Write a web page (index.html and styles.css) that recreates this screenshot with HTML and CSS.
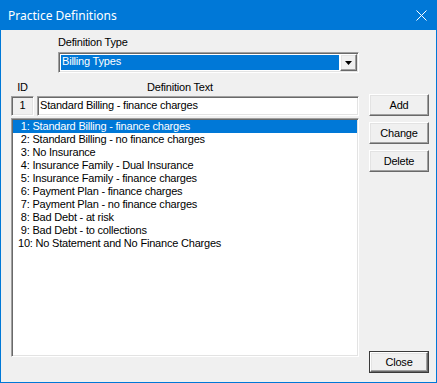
FILE: index.html
```html
<!DOCTYPE html>
<html>
<head>
<meta charset="utf-8">
<link rel="stylesheet" href="styles.css">
</head>
<body>
<div class="window">
  <div class="titlebar">
    <span class="title">Practice Definitions</span>
    <svg class="close-x" width="11" height="11" viewBox="0 0 11 11"><path d="M0.5 0.5 L10.5 10.5 M10.5 0.5 L0.5 10.5" stroke="#fff" stroke-width="1" fill="none"/></svg>
  </div>
  <div class="client">
    <div class="left">
      <div class="type-lbl">Definition Type</div>
      <div class="combo sunken">
        <div class="combo-value">Billing Types</div>
        <div class="combo-btn raised"><svg width="7" height="4" viewBox="0 0 7 4"><polygon points="0,0 7,0 3.5,4" fill="#000"/></svg></div>
      </div>
      <div class="lbl-row"><span class="id-lbl">ID</span><span class="text-lbl">Definition Text</span></div>
      <div class="field-row">
        <div class="id-box sunken">1</div>
        <div class="text-box sunken">Standard Billing - finance charges</div>
      </div>
      <div class="listbox sunken">
        <div class="row selected">&nbsp;1: Standard Billing - finance charges</div>
        <div class="row">&nbsp;2: Standard Billing - no finance charges</div>
        <div class="row">&nbsp;3: No Insurance</div>
        <div class="row">&nbsp;4: Insurance Family - Dual Insurance</div>
        <div class="row">&nbsp;5: Insurance Family - finance charges</div>
        <div class="row">&nbsp;6: Payment Plan - finance charges</div>
        <div class="row">&nbsp;7: Payment Plan - no finance charges</div>
        <div class="row">&nbsp;8: Bad Debt - at risk</div>
        <div class="row">&nbsp;9: Bad Debt - to collections</div>
        <div class="row">10: No Statement and No Finance Charges</div>
      </div>
    </div>
    <div class="right">
      <div class="btn raised">Add</div>
      <div class="btn raised">Change</div>
      <div class="btn raised">Delete</div>
      <div class="btn-default"><div class="btn raised">Close</div></div>
    </div>
  </div>
</div>
</body>
</html>
```
FILE: styles.css
```css
body {
  margin: 0;
  background: #ffffff;
}
.window {
  width: 437px;
  height: 383px;
  display: flex;
  flex-direction: column;
  font-family: "Liberation Sans", Arial, sans-serif;
  font-size: 11px;
  line-height: 13px;
  letter-spacing: -0.2px;
  color: #000;
}
.titlebar {
  height: 30px;
  flex: none;
  background: #0078d7;
  color: #fff;
  display: flex;
  align-items: center;
  justify-content: space-between;
  padding: 0 10px 0 8px;
  font-family: "Noto Sans", sans-serif;
  font-size: 12px;
  letter-spacing: 0;
}
.close-x {
  display: block;
  margin-top: 1px;
}
.client {
  flex: 1;
  display: flex;
  gap: 10px;
  background: #f0f0f0;
  border: 1px solid #0078d7;
  border-top: 0;
  padding: 0 7px 9px 10px;
}
.left {
  width: 348px;
  display: flex;
  flex-direction: column;
}
.right {
  width: 60px;
  display: flex;
  flex-direction: column;
  padding-top: 64px;
}
.sunken {
  box-sizing: border-box;
  border: 1px solid;
  border-color: #a0a0a0 #ffffff #ffffff #a0a0a0;
  box-shadow: inset 1px 1px 0 #696969, inset -1px -1px 0 #e3e3e3;
  padding: 1px;
}
.raised {
  box-sizing: border-box;
  border: 1px solid;
  border-color: #ffffff #696969 #696969 #ffffff;
  box-shadow: inset -1px -1px 0 #a0a0a0, inset 1px 1px 0 #e3e3e3;
  background: #f0f0f0;
}
.type-lbl {
  margin-top: 6px;
  margin-left: 47px;
}
.combo {
  margin-top: 3px;
  margin-left: 47px;
  width: 301px;
  height: 21px;
  background: #fff;
  display: flex;
}
.combo-value {
  flex: 1;
  margin: 1px 1px 1px 1px;
  background: #0078d7;
  color: #fff;
  padding: 0 0 1px 1px;
  line-height: 13px;
}
.combo-btn {
  width: 17px;
  height: 17px;
  display: flex;
  align-items: center;
  justify-content: center;
}
.combo-btn svg {
  display: block;
  margin: 1px 0 0 0;
}
.lbl-row {
  margin-top: 8px;
  display: flex;
}
.id-lbl {
  width: 23px;
  text-align: center;
}
.text-lbl {
  margin-left: 113px;
}
.field-row {
  margin-top: 2px;
  display: flex;
  gap: 3px;
}
.id-box {
  width: 23px;
  height: 20px;
  text-align: center;
  background: #f0f0f0;
  padding-top: 2px;
}
.text-box {
  flex: 1;
  height: 20px;
  background: #fff;
  padding: 2px 2px 0 2px;
}
.listbox {
  margin-top: 2px;
  height: 239px;
  background: #fff;
}
.row {
  height: 13px;
  padding-left: 5px;
  white-space: nowrap;
}
.row.selected {
  background: #0078d7;
  color: #fff;
}
.btn {
  height: 22px;
  display: flex;
  align-items: center;
  justify-content: center;
  margin-bottom: 6px;
}
.btn-default {
  margin-top: auto;
  border: 1px solid #3a3a3a;
  height: 22px;
  box-sizing: border-box;
}
.btn-default .btn {
  height: 20px;
  margin: 0;
}
```
